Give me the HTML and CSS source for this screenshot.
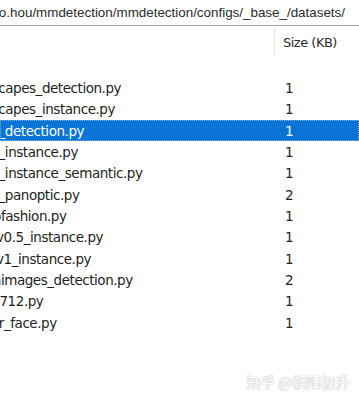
FILE: index.html
```html
<!DOCTYPE html>
<html lang="en">
<head>
  <meta charset="UTF-8">
  <title>datasets - Remote</title>
  <link rel="stylesheet" href="styles.css">
</head>
<body>
  <!-- Address bar -->
  <div class="path-bar">
    <span class="path">/home/zhao.hou/mmdetection/mmdetection/configs/_base_/datasets/</span>
  </div>

  <!-- File list -->
  <div class="file-list">
    <div class="list-head">
      <div class="col-name"></div>
      <div class="col-size">Size (KB)</div>
    </div>
    <div class="row parent"><span class="name">..</span><span class="size"></span></div>
    <div class="row"><span class="name">cityscapes_detection.py</span><span class="size">1</span></div>
    <div class="row"><span class="name">cityscapes_instance.py</span><span class="size">1</span></div>
    <div class="row selected"><span class="name">coco_detection.py</span><span class="size">1</span></div>
    <div class="row"><span class="name">coco_instance.py</span><span class="size">1</span></div>
    <div class="row"><span class="name">coco_instance_semantic.py</span><span class="size">1</span></div>
    <div class="row"><span class="name">coco_panoptic.py</span><span class="size">2</span></div>
    <div class="row"><span class="name">deepfashion.py</span><span class="size">1</span></div>
    <div class="row"><span class="name">lvis_v0.5_instance.py</span><span class="size">1</span></div>
    <div class="row"><span class="name">lvis_v1_instance.py</span><span class="size">1</span></div>
    <div class="row"><span class="name">openimages_detection.py</span><span class="size">2</span></div>
    <div class="row"><span class="name">voc0712.py</span><span class="size">1</span></div>
    <div class="row"><span class="name">wider_face.py</span><span class="size">1</span></div>
  </div>

  <div class="watermark">知乎 @朝阳初升</div>
</body>
</html>
```

FILE: styles.css
```css
* {
  margin: 0;
  padding: 0;
  box-sizing: border-box;
}
:root {
  --text: #1e1e1e;
  --select: #0a74d6;
  --rule: #a3a3a3;
  --divider: #e6e6e6;
}
body {
  width: 359px;
  height: 405px;
  overflow: hidden;
  background: #fff;
  color: var(--text);
  font-family: "DejaVu Sans", sans-serif;
  position: relative;
}

/* Address bar */
.path-bar {
  height: 26px;
  border-bottom: 1px solid var(--rule);
  display: flex;
  justify-content: flex-end;
  align-items: center;
  padding-right: 14px;
  overflow: hidden;
  white-space: nowrap;
}
.path {
  font-family: "Liberation Sans", Arial, sans-serif;
  font-size: 13.4px;
  color: #2b2b2b;
}

/* File list */
.file-list {
  padding-top: 2px;
}
.list-head {
  display: flex;
  height: 28px;
  align-items: center;
}
.col-name {
  width: 275px;
  height: 100%;
  border-right: 1px solid var(--divider);
}
.col-size {
  padding-left: 8px;
  font-size: 13px;
  letter-spacing: -0.5px;
  color: #2b2b2b;
}
.row {
  display: flex;
  height: 21.33px;
  align-items: center;
  font-size: 13.5px;
  letter-spacing: -0.45px;
  white-space: nowrap;
}
.row .name {
  width: 316px;
  margin-left: -31px;
  flex-shrink: 0;
}
.row.selected {
  background: var(--select);
  color: #fff;
  outline: 1px dotted #7fb4e8;
  outline-offset: -1px;
}

/* Watermark */
.watermark {
  position: absolute;
  right: 9px;
  bottom: 13px;
  font-family: "Noto Sans CJK SC", sans-serif;
  font-size: 14.5px;
  color: #fff;
  text-shadow: 0 0 1px #b5b5b5, 0 0 1px #b5b5b5;
}
```
